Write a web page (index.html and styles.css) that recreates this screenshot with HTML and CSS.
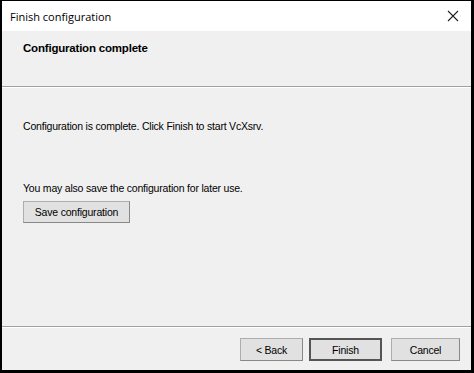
FILE: index.html
```html
<!DOCTYPE html>
<html lang="en">
<head>
    <meta charset="UTF-8">
    <title>Finish configuration</title>
    <link rel="stylesheet" href="styles.css">
</head>
<body>

<div class="window">
    <!-- Title bar -->
    <div class="titlebar">
        <span class="title">Finish configuration</span>
        <span class="close">
            <svg width="12" height="12" viewBox="0 0 12 12">
                <path d="M1 1 L11 11 M11 1 L1 11" stroke="#222" stroke-width="1.1" fill="none"/>
            </svg>
        </span>
    </div>

    <!-- Wizard header -->
    <div class="wizard-header">
        <h2>Configuration complete</h2>
    </div>
    <div class="separator"></div>

    <!-- Page body -->
    <div class="wizard-body">
        <p class="info">Configuration is complete. Click Finish to start VcXsrv.</p>
        <p class="save-text">You may also save the configuration for later use.</p>
        <button class="btn save-btn">Save configuration</button>
    </div>

    <div class="separator"></div>

    <!-- Buttons -->
    <div class="wizard-footer">
        <button class="btn">&lt; Back</button>
        <button class="btn default">Finish</button>
        <button class="btn cancel">Cancel</button>
    </div>
</div>

</body>
</html>
```

FILE: styles.css
```css
/* General */
body {
    margin: 0;
    padding: 0;
    background-color: #000;
    font-family: 'Liberation Sans', Arial, sans-serif;
    font-size: 10.5px;
    letter-spacing: -0.2px;
    color: #000;
}

.window {
    width: 469px;
    height: 369px;
    margin: 1px 0 0 2px;
    background-color: #f0f0f0;
    display: flex;
    flex-direction: column;
}

/* Title bar */
.titlebar {
    height: 30px;
    background-color: #fff;
    display: flex;
    align-items: center;
    justify-content: space-between;
    padding: 0 12px 0 8px;
}

.title {
    font-family: 'Open Sans', sans-serif;
    font-size: 11px;
    letter-spacing: 0;
    color: #000;
}

.close {
    display: flex;
    align-items: center;
}

/* Header */
.wizard-header {
    height: 55px;
    background-color: #f0f0f0;
}

.wizard-header h2 {
    margin: 0;
    padding: 11px 0 0 21px;
    font-size: 11.5px;
    font-weight: bold;
}

.separator {
    height: 1px;
    background-color: #a0a0a0;
    border-bottom: 1px solid #fff;
}

/* Body */
.wizard-body {
    flex: 1;
    padding: 0 0 0 21px;
}

.info {
    margin: 32px 0 0 0;
}

.save-text {
    margin: 50px 0 0 0;
}

.btn {
    font-family: 'Liberation Sans', Arial, sans-serif;
    font-size: 10.5px;
    letter-spacing: -0.2px;
    background-color: #e1e1e1;
    border: 1px solid #adadad;
    border-right-color: #888;
    border-bottom-color: #888;
    padding: 0;
    height: 22px;
    color: #000;
}

.save-btn {
    margin-top: 7px;
    width: 107px;
}

/* Footer */
.wizard-footer {
    height: 42px;
    display: flex;
    align-items: flex-start;
    padding: 10px 0 0 238px;
    box-sizing: border-box;
    gap: 6px;
}

.wizard-footer .btn {
    width: 63px;
    height: 23px;
}

.wizard-footer .default {
    width: 73px;
    border: 2px solid #555;
}

.wizard-footer .cancel {
    width: 69px;
    margin-left: 3px;
}
```
